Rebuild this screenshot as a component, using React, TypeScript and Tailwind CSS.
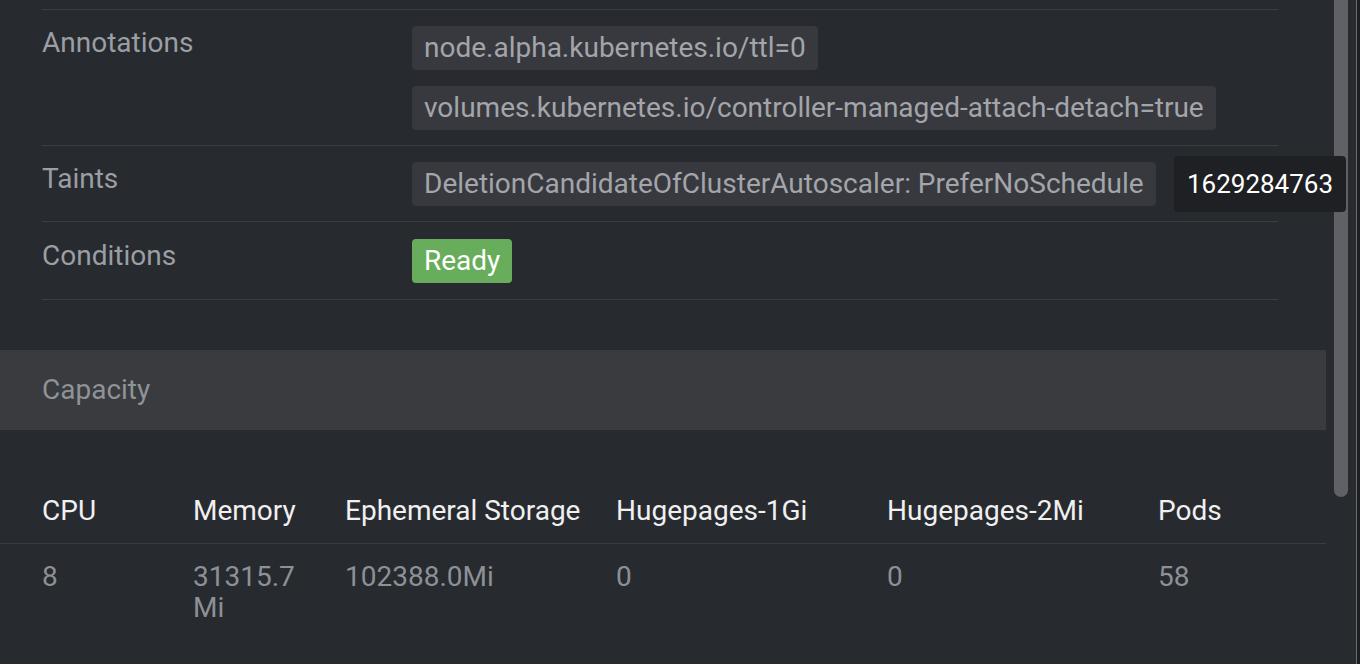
const ANNOTATIONS = [
  'node.alpha.kubernetes.io/ttl=0',
  'volumes.kubernetes.io/controller-managed-attach-detach=true',
];

const CAPACITY = [
  { label: 'CPU', value: '8', width: 'w-[151px]' },
  { label: 'Memory', value: '31315.7Mi', width: 'w-[152px]' },
  { label: 'Ephemeral Storage', value: '102388.0Mi', width: 'w-[271px]' },
  { label: 'Hugepages-1Gi', value: '0', width: 'w-[271px]' },
  { label: 'Hugepages-2Mi', value: '0', width: 'w-[271px]' },
  { label: 'Pods', value: '58', width: 'flex-1' },
];

function Chip({ children }: { children: React.ReactNode }) {
  return (
    <span className="inline-block rounded bg-[#37393e] px-3 py-2 leading-[28px] text-[#a3a5aa]">
      {children}
    </span>
  );
}

function Row({
  label,
  children,
  last,
}: {
  label: string;
  children: React.ReactNode;
  last?: boolean;
}) {
  return (
    <div
      className={`flex border-t border-[#393c41] ${last ? 'border-b pt-[17px] pb-4' : 'pt-4 pb-[15px]'}`}
    >
      <div className="w-[370px] shrink-0 leading-[34px] text-[#9b9ea3]">{label}</div>
      <div className="flex flex-col items-start gap-4">{children}</div>
    </div>
  );
}

export default function App() {
  return (
    <div
      className="relative flex h-[664px] w-[1360px] overflow-hidden bg-[#272a2f] text-[28px]"
      style={{ fontFamily: 'Roboto, "Noto Sans", sans-serif' }}
    >
      {/* main content */}
      <div className="w-[1326px] shrink-0">
        <div className="pl-[42px] pr-[48px] pt-[9px]">
          <Row label="Annotations">
            {ANNOTATIONS.map((a) => (
              <Chip key={a}>{a}</Chip>
            ))}
          </Row>
          <Row label="Taints">
            <Chip>DeletionCandidateOfClusterAutoscaler: PreferNoSchedule</Chip>
          </Row>
          <Row label="Conditions" last>
            <span className="inline-block rounded bg-[#67ad5b] px-3 py-2 leading-[28px] text-white">
              Ready
            </span>
          </Row>
        </div>

        <div className="mt-[50px] flex h-[80px] items-center bg-[#393b3f] pl-[42px] text-[#8f9297]">
          Capacity
        </div>

        <div className="mt-[65px]">
          <div className="flex border-b border-[#393c41] pb-4 pl-[42px] leading-[32px] text-[#f0f0f0]">
            {CAPACITY.map((c) => (
              <div key={c.label} className={`${c.width} shrink-0`}>
                {c.label}
              </div>
            ))}
          </div>
          <div className="flex pl-[42px] pt-[17px] leading-[31px] text-[#8d9095]">
            {CAPACITY.map((c) => (
              <div key={c.label} className={`${c.width} shrink-0 pr-9 break-all`}>
                {c.value}
              </div>
            ))}
          </div>
        </div>
      </div>

      {/* scrollbar */}
      <div className="flex flex-1">
        <div className="ml-2 h-[497px] w-[14px] rounded-b-full bg-[#5f6166]" />
        <div className="ml-2 w-px bg-[#6a6c70]" />
        <div className="flex-1 bg-[#1d1e21]" />
      </div>

      {/* tooltip */}
      <div className="absolute left-[1174px] top-[156px] flex h-[56px] w-[172px] items-center justify-center rounded bg-[#1f2023] text-[26px] text-white">
        1629284763
      </div>
    </div>
  );
}
